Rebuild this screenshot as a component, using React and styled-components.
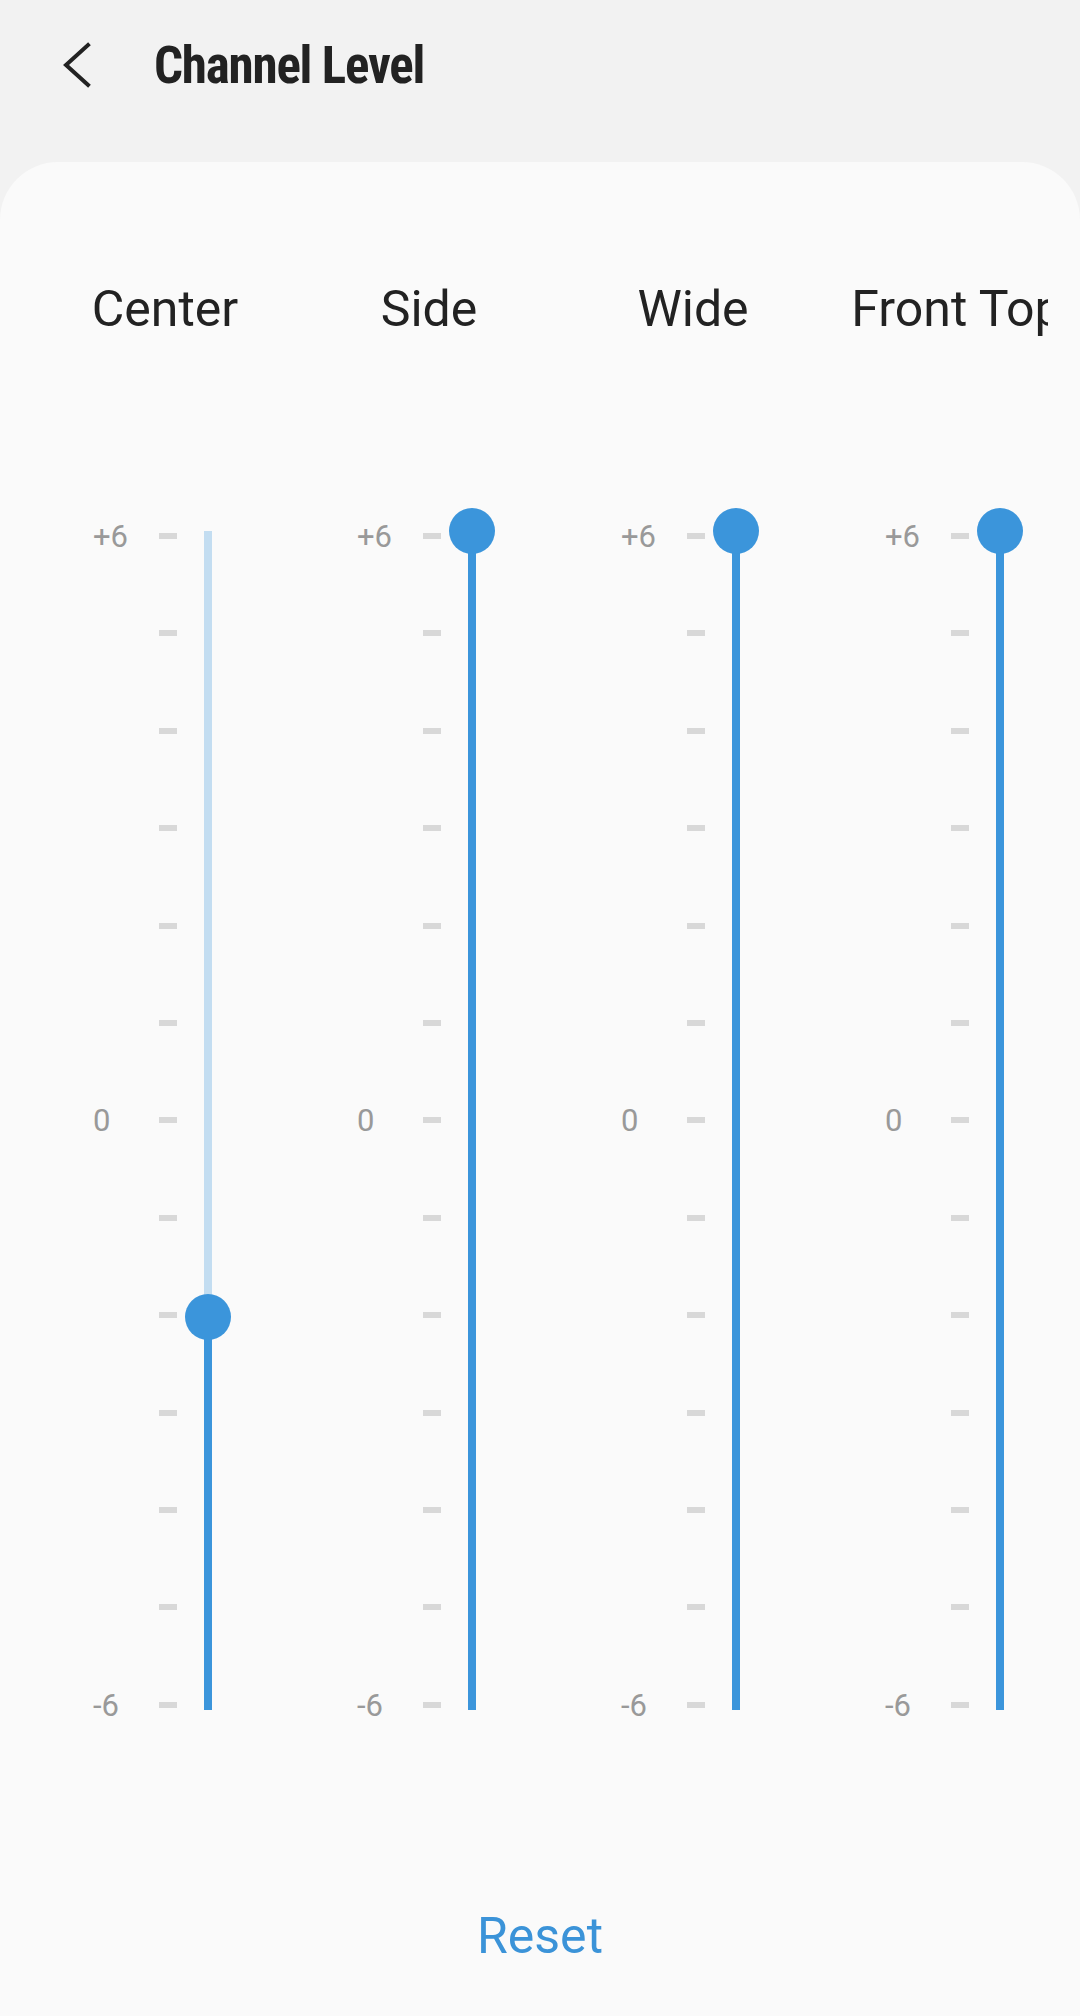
import styled, { createGlobalStyle } from "styled-components";

const GlobalStyle = createGlobalStyle`
  html, body {
    margin: 0;
    padding: 0;
    background: #f2f2f2;
    font-family: Roboto, "Noto Sans", sans-serif;
  }
`;

const Page = styled.div`
  width: 1080px;
  min-height: 2016px;
  display: flex;
  flex-direction: column;
  background: #f2f2f2;
  overflow: hidden;
`;

const Header = styled.header`
  height: 130px;
  display: flex;
  align-items: center;
  gap: 62px;
  padding-left: 62px;
`;

const BackButton = styled.button`
  border: 0;
  padding: 0;
  background: none;
  width: 30px;
  height: 48px;
  display: flex;
  align-items: center;
  justify-content: center;
  cursor: pointer;
`;

const Title = styled.h1`
  margin: 0;
  font-family: Roboto, "Noto Sans", sans-serif;
  font-stretch: 75%;
  font-weight: 700;
  font-size: 51px;
  color: #222222;
  letter-spacing: -1.2px;
`;

const Card = styled.main`
  flex: 1;
  margin-top: 32px;
  background: #fafafa;
  border-radius: 58px 58px 0 0;
  padding-top: 117px;
  display: flex;
  flex-direction: column;
  align-items: stretch;
`;

const Channels = styled.div`
  display: flex;
  margin: 0 32px 0 33px;
  padding-bottom: 30px;
  overflow: hidden;
`;

const Channel = styled.div`
  flex: 0 0 264px;
  display: flex;
  flex-direction: column;
`;

const ChannelName = styled.div`
  height: 60px;
  line-height: 60px;
  text-align: center;
  white-space: nowrap;
  font-size: 50px;
  color: #222222;
`;

const Slider = styled.div`
  margin-top: 192px;
  height: 1179px;
  display: flex;
  padding-left: 60px;
`;

const Scale = styled.div`
  width: 66px;
  display: flex;
  flex-direction: column;
  justify-content: space-between;
  padding: 5px 0;
`;

const Slot = styled.div`
  height: 0;
  display: flex;
  align-items: center;
`;

const ScaleLabel = styled.span`
  font-size: 31px;
  line-height: 1;
  color: #999999;
`;

const Ticks = styled.div`
  width: 18px;
  display: flex;
  flex-direction: column;
  justify-content: space-between;
  padding: 5px 0;
`;

const Tick = styled.span`
  display: block;
  width: 18px;
  height: 6px;
  flex-shrink: 0;
  background: #d8d8d8;
`;

const Track = styled.div`
  position: relative;
  margin-left: 27px;
  width: 8px;
  height: 100%;
  background: #c3ddf1;
  display: flex;
  flex-direction: column;
  justify-content: flex-end;
`;

const Fill = styled.div`
  width: 100%;
  background: #3b95db;
`;

const Thumb = styled.div`
  position: absolute;
  left: 50%;
  width: 46px;
  height: 46px;
  border-radius: 50%;
  background: #3b95db;
  transform: translate(-50%, 50%);
`;

const ResetButton = styled.button`
  margin: 166px auto 0;
  border: 0;
  background: none;
  padding: 0;
  height: 60px;
  line-height: 60px;
  font-family: Roboto, "Noto Sans", sans-serif;
  font-size: 50px;
  color: #3b93d8;
  cursor: pointer;
`;

const channels = [
  { name: "Center", value: -2 },
  { name: "Side", value: 6 },
  { name: "Wide", value: 6 },
  { name: "Front Top", value: 6 },
];

function ChannelSlider({ value }) {
  const pct = ((value + 6) / 12) * 100;
  return (
    <Slider>
      <Scale>
        <Slot><ScaleLabel>+6</ScaleLabel></Slot>
        <Slot><ScaleLabel>0</ScaleLabel></Slot>
        <Slot><ScaleLabel>-6</ScaleLabel></Slot>
      </Scale>
      <Ticks>
        {Array.from({ length: 13 }).map((_, i) => (
          <Slot key={i}><Tick /></Slot>
        ))}
      </Ticks>
      <Track>
        <Fill style={{ height: `${pct}%` }} />
        <Thumb style={{ bottom: `${pct}%` }} />
      </Track>
    </Slider>
  );
}

export default function App() {
  return (
    <>
      <GlobalStyle />
      <Page>
        <Header>
          <BackButton aria-label="Back">
            <svg width="30" height="48" viewBox="0 0 30 48" fill="none">
              <path d="M26 4 L4 24 L26 44" stroke="#222" strokeWidth="4" strokeLinecap="square" strokeLinejoin="miter" />
            </svg>
          </BackButton>
          <Title>Channel Level</Title>
        </Header>
        <Card>
          <Channels>
            {channels.map((c) => (
              <Channel key={c.name}>
                <ChannelName>{c.name}</ChannelName>
                <ChannelSlider value={c.value} />
              </Channel>
            ))}
          </Channels>
          <ResetButton>Reset</ResetButton>
        </Card>
      </Page>
    </>
  );
}
